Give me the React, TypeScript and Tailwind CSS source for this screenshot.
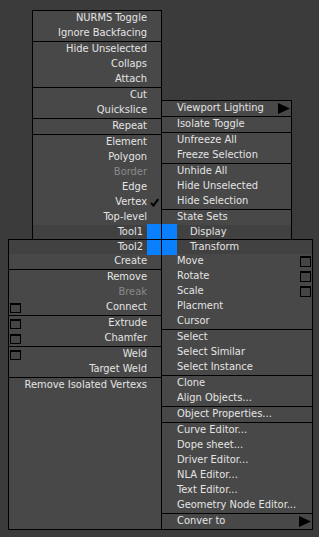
type Item = {
  label: string;
  disabled?: boolean;
  check?: boolean;
  box?: boolean;
  arrow?: boolean;
};

const topLeft: Item[][] = [
  [{ label: "NURMS Toggle" }, { label: "Ignore Backfacing" }],
  [{ label: "Hide Unselected" }, { label: "Collaps" }, { label: "Attach" }],
  [{ label: "Cut" }, { label: "Quickslice" }],
  [{ label: "Repeat" }],
  [
    { label: "Element" },
    { label: "Polygon" },
    { label: "Border", disabled: true },
    { label: "Edge" },
    { label: "Vertex", check: true },
    { label: "Top-level" },
  ],
];

const bottomLeft: Item[][] = [
  [{ label: "Create" }],
  [{ label: "Remove" }, { label: "Break", disabled: true }, { label: "Connect", box: true }],
  [{ label: "Extrude", box: true }, { label: "Chamfer", box: true }],
  [{ label: "Weld", box: true }, { label: "Target Weld" }],
  [{ label: "Remove Isolated Vertexs" }],
];

const topRight: Item[][] = [
  [{ label: "Viewport Lighting", arrow: true }],
  [{ label: "Isolate Toggle" }],
  [{ label: "Unfreeze All" }, { label: "Freeze Selection" }],
  [{ label: "Unhide All" }, { label: "Hide Unselected" }, { label: "Hide Selection" }],
  [{ label: "State Sets" }],
];

const bottomRight: Item[][] = [
  [
    { label: "Move", box: true },
    { label: "Rotate", box: true },
    { label: "Scale", box: true },
    { label: "Placment" },
    { label: "Cursor" },
  ],
  [{ label: "Select" }, { label: "Select Similar" }, { label: "Select Instance" }],
  [{ label: "Clone" }, { label: "Align Objects..." }],
  [{ label: "Object Properties..." }],
  [
    { label: "Curve Editor..." },
    { label: "Dope sheet..." },
    { label: "Driver Editor..." },
    { label: "NLA Editor..." },
    { label: "Text Editor..." },
    { label: "Geometry Node Editor..." },
  ],
  [{ label: "Conver to", arrow: true }],
];

const Check = () => (
  <svg width="9" height="9" viewBox="0 0 9 9" className="ml-[3px] mt-[3px]">
    <path d="M1 4.8 L3.4 7.6 L8.2 1.2" fill="none" stroke="#000" strokeWidth="2" />
  </svg>
);

const Box = () => (
  <div className="h-[10px] w-[11px] border border-t-2 border-black bg-[#454545]" />
);

const Arrow = () => (
  <svg width="12" height="11" viewBox="0 0 12 11">
    <path d="M0 0 L12 5.5 L0 11 Z" fill="#000" />
  </svg>
);

const LeftRow = ({ item }: { item: Item }) => (
  <div className="flex h-[15px]">
    <div className="w-[13px] pl-px pt-[3px]">{item.box && <Box />}</div>
    <div
      className={`flex-1 text-right leading-[13px] ${item.disabled ? "text-[#8a8a8a]" : "text-[#e4e4e4]"}`}
    >
      {item.label}
    </div>
    <div className="w-[14px]">{item.check && <Check />}</div>
  </div>
);

const RightRow = ({ item }: { item: Item }) => (
  <div className="flex h-[15px]">
    <div className="flex-1 pl-[15px] leading-[13px] text-[#e4e4e4]">{item.label}</div>
    {item.box && (
      <div className="mr-px pt-[2px]">
        <div className="h-[11px] w-[11px] border border-t-2 border-black bg-[#454545]" />
      </div>
    )}
    {item.arrow && (
      <div className="mr-px pt-[2px]">
        <Arrow />
      </div>
    )}
  </div>
);

const Groups = ({ groups, right }: { groups: Item[][]; right?: boolean }) => (
  <>
    {groups.map((g, gi) => (
      <div key={gi} className={gi > 0 ? "border-t border-black" : ""}>
        {g.map((item) =>
          right ? <RightRow key={item.label} item={item} /> : <LeftRow key={item.label} item={item} />,
        )}
      </div>
    ))}
  </>
);

const App = () => {
  return (
    <div
      className="relative h-[537px] w-[319px] overflow-hidden bg-[#3b3b3b] text-[11px]"
      style={{ fontFamily: '"DejaVu Sans Condensed", "DejaVu Sans", sans-serif' }}
    >
      <div className="grid grid-cols-[162px_1fr] grid-rows-[240px_auto]">
        <div className="flex items-end justify-end">
          <div className="w-[130px] border border-black bg-[#484848]">
            <Groups groups={topLeft} />
            <div className="flex h-[14px] justify-end bg-[#414141] pr-[18px] leading-[13px] text-[#e4e4e4]">
              Tool1
            </div>
          </div>
        </div>

        <div className="flex items-end">
          <div className="-ml-px w-[131px] border border-black bg-[#484848]">
            <Groups groups={topRight} right />
            <div className="h-[14px] bg-[#414141] pl-[28px] leading-[13px] text-[#e4e4e4]">Display</div>
          </div>
        </div>

        <div className="flex justify-end">
          <div className="-mt-px w-[154px] border border-black bg-[#484848]">
            <div className="flex h-[14px] justify-end bg-[#414141] pr-[18px] leading-[13px] text-[#e4e4e4]">
              Tool2
            </div>
            <Groups groups={bottomLeft} />
          </div>
        </div>

        <div className="flex">
          <div className="-ml-px -mt-px w-[152px] border border-black bg-[#484848]">
            <div className="h-[14px] bg-[#414141] pl-[28px] leading-[13px] text-[#e4e4e4]">Transform</div>
            <Groups groups={bottomRight} right />
          </div>
        </div>
      </div>

      <div className="absolute left-[147px] top-[224px] grid grid-cols-[14px_15px] grid-rows-[15px_15px] gap-px bg-black">
        <div className="bg-[#0a80ff]" />
        <div className="bg-[#0a80ff]" />
        <div className="bg-[#0a80ff]" />
        <div className="bg-[#0a80ff]" />
      </div>
    </div>
  );
};

export default App;
